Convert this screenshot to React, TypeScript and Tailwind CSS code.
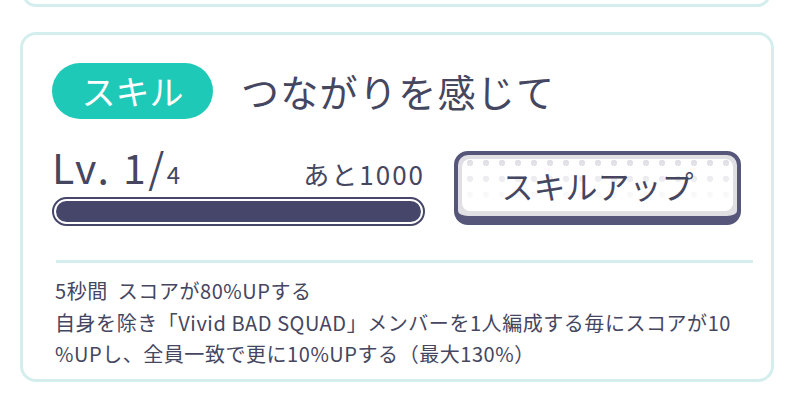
import React from 'react';

const ink = 'text-[#45465f]';

const SkillCard: React.FC = () => {
  return (
    <div className="ml-[20px] mt-[25px] h-[350px] w-[754px] rounded-[16px] border-[3px] border-[#d4eeee] bg-white">
      <div className="flex items-center gap-[28px] pl-[29px] pt-[28px]">
        <div className="flex h-[56px] w-[161px] items-center justify-center rounded-full bg-[#1fc9b7] text-[34px] leading-none text-white">
          スキル
        </div>
        <div className={`text-[38px] leading-none tracking-[1.3px] ${ink}`}>つながりを感じて</div>
      </div>

      <div className="mt-[32px] flex pl-[29px]">
        <div className="flex w-[373px] flex-col">
          <div className={`flex h-[43px] items-end justify-between pb-[7px] ${ink}`}>
            <span className="leading-none">
              <span className="text-[41px] tracking-[2.5px]">Lv. 1/</span>
              <span className="text-[24px]">4</span>
            </span>
            <span className="text-[26px] leading-none tracking-[2px]">あと1000</span>
          </div>
          <div className="mt-[3px] h-[29px] rounded-full border-2 border-[#45466a] bg-white p-[2px]">
            <div className="h-full w-full rounded-full bg-[#45466a]" />
          </div>
        </div>

        <button
          type="button"
          className="ml-[29px] h-[74px] w-[287px] rounded-[14px] border-[4px] border-b-[9px] border-[#56567a] bg-[#dfdfe4] p-[4px] pb-[5px]"
        >
          <div className="flex h-full w-full items-center justify-center rounded-[8px] bg-white bg-[linear-gradient(to_bottom,rgba(255,255,255,0)_0%,#ffffff_85%),radial-gradient(circle,#dfdfe6_3px,transparent_3.5px)] bg-[length:100%_100%,16px_16px] bg-[position:0_0,0_-4px]">
            <span className={`text-[32px] leading-none ${ink}`}>スキルアップ</span>
          </div>
        </button>
      </div>

      <div className="ml-[33px] mt-[34px] h-[3px] w-[697px] bg-[#d4eeee]" />

      <div className={`ml-[32px] mt-[12px] text-[20px] leading-[31.5px] tracking-[0.55px] ${ink}`}>
        <div className="whitespace-nowrap">5秒間&nbsp;&nbsp;スコアが80%UPする</div>
        <div className="whitespace-nowrap">自身を除き「Vivid BAD SQUAD」メンバーを1人編成する毎にスコアが10</div>
        <div className="whitespace-nowrap">%UPし、全員一致で更に10%UPする（最大130%）</div>
      </div>
    </div>
  );
};

export default function App() {
  return (
    <div className="h-[407px] w-[786px] overflow-hidden bg-white font-['Noto_Sans_CJK_JP','Noto_Sans',sans-serif]">
      <div className="ml-[22px] mt-[-30px] h-[37px] w-[749px] rounded-b-[14px] border-x-[3px] border-b-[3px] border-[#d4eeee]" />
      <SkillCard />
    </div>
  );
}
